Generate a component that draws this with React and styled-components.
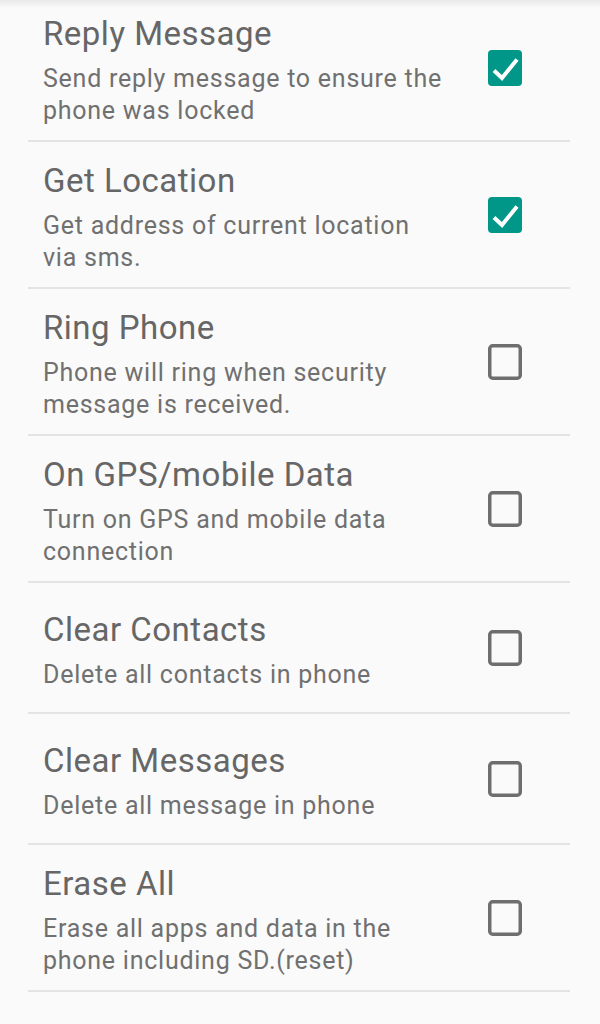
import React from 'react';
import styled, { createGlobalStyle } from 'styled-components';

const GlobalStyle = createGlobalStyle`
  html, body {
    margin: 0;
    padding: 0;
    background: #fafafa;
  }
  body {
    font-family: Roboto, 'Noto Sans', sans-serif;
  }
`;

const Screen = styled.div`
  position: relative;
  width: 600px;
  height: 1024px;
  overflow: hidden;
  background: #fafafa;

  /* shadow under the (hidden) action bar */
  &::before {
    content: '';
    position: absolute;
    top: 0;
    left: 0;
    right: 0;
    height: 8px;
    background: linear-gradient(rgba(0, 0, 0, 0.07), rgba(0, 0, 0, 0));
    z-index: 2;
  }
`;

const List = styled.div`
  display: flex;
  flex-direction: column;
  margin: -5px 30px 0 28px;
`;

const Row = styled.div`
  display: flex;
  align-items: center;
  min-height: 129px;
  border-bottom: 2px solid #e4e4e4;
`;

const Texts = styled.div`
  flex: 1;
  padding: 19px 0 13px 15px;
`;

const Title = styled.div`
  font-size: 33px;
  line-height: 40px;
  letter-spacing: 0.5px;
  color: #666666;
`;

const Summary = styled.div`
  margin-top: 9px;
  font-size: 25px;
  line-height: 32px;
  letter-spacing: 0.75px;
  color: #707070;
  max-width: 402px;
`;

const Box = styled.svg`
  flex: none;
  width: 34px;
  height: 36px;
  margin: 0 48px 0 0;
`;

const CheckBox = ({ checked }) => (
  <Box viewBox="0 0 34 36">
    {checked ? (
      <>
        <rect x="0" y="0" width="34" height="36" rx="4" fill="#009688" />
        <path
          d="M6 20.5 L14 28 L29 9.5"
          fill="none"
          stroke="#ffffff"
          strokeWidth="4"
        />
      </>
    ) : (
      <rect
        x="1.75"
        y="1.75"
        width="30.5"
        height="32.5"
        rx="3"
        fill="none"
        stroke="#6e6e6e"
        strokeWidth="3.5"
      />
    )}
  </Box>
);

const prefs = [
  {
    title: 'Reply Message',
    summary: 'Send reply message to ensure the phone was locked',
    checked: true,
  },
  {
    title: 'Get Location',
    summary: 'Get address of current location via sms.',
    checked: true,
  },
  {
    title: 'Ring Phone',
    summary: 'Phone will ring when security message is received.',
    checked: false,
  },
  {
    title: 'On GPS/mobile Data',
    summary: 'Turn on GPS and mobile data connection',
    checked: false,
  },
  {
    title: 'Clear Contacts',
    summary: 'Delete all contacts in phone',
    checked: false,
  },
  {
    title: 'Clear Messages',
    summary: 'Delete all message in phone',
    checked: false,
  },
  {
    title: 'Erase All',
    summary: 'Erase all apps and data in the phone including SD.(reset)',
    checked: false,
  },
];

export default function App() {
  return (
    <>
      <GlobalStyle />
      <Screen>
        <List>
          {prefs.map(p => (
            <Row key={p.title}>
              <Texts>
                <Title>{p.title}</Title>
                <Summary>{p.summary}</Summary>
              </Texts>
              <CheckBox checked={p.checked} />
            </Row>
          ))}
        </List>
      </Screen>
    </>
  );
}
